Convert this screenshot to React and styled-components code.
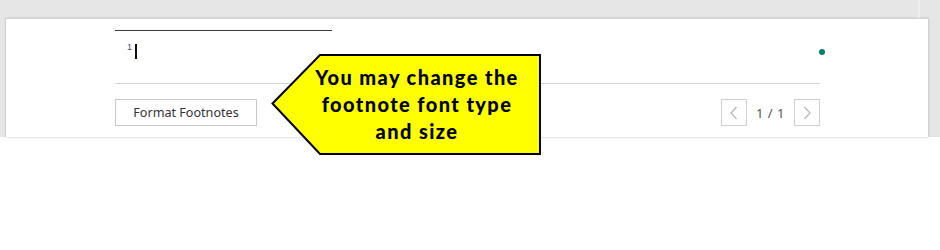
import React from 'react';
import styled, { createGlobalStyle } from 'styled-components';

const GlobalStyle = createGlobalStyle`
  html, body {
    margin: 0;
    padding: 0;
    background: #ffffff;
  }
  body {
    font-family: "Noto Sans", "Open Sans", sans-serif;
  }
`;

const Screen = styled.div`
  position: relative;
  width: 940px;
  height: 250px;
  background: #ffffff;
`;

const Workspace = styled.div`
  position: relative;
  height: 137px;
  background: #e6e6e6;
  padding: 18px 0 0 6px;
  box-sizing: border-box;
  display: flex;
  &::after {
    content: '';
    position: absolute;
    left: 918px;
    top: 0;
    width: 2px;
    height: 18px;
    background: #ededed;
  }
`;

const Page = styled.div`
  width: 922px;
  background: #ffffff;
  border-top: 1px solid #d2d2d2;
  box-shadow: -1px 0 1px #cfcfcf, 1px 0 2px #c8c8c8;
  box-sizing: border-box;
  padding: 11px 0 0 109px;
`;

const Column = styled.div`
  width: 705px;
  display: flex;
  flex-direction: column;
`;

const Separator = styled.div`
  width: 217px;
  height: 1px;
  background: #3a3a3a;
`;

const FootnoteRow = styled.div`
  height: 52px;
  display: flex;
  align-items: flex-start;
  justify-content: space-between;
  padding: 12px 0 0 12px;
  box-sizing: border-box;
`;

const Note = styled.div`
  display: flex;
  align-items: flex-start;
`;

const Mark = styled.span`
  font-family: "Liberation Sans", Arial, sans-serif;
  font-size: 9px;
  line-height: 9px;
  color: #44546a;
`;

const Caret = styled.span`
  display: block;
  width: 1.5px;
  height: 15px;
  margin: 1px 0 0 3px;
  background: #111111;
`;

const Dot = styled.span`
  width: 6px;
  height: 6px;
  border-radius: 50%;
  background: #00806b;
  margin: 6px -5px 0 0;
`;

const Divider = styled.div`
  height: 1px;
  background: #d4d4d4;
`;

const Controls = styled.div`
  display: flex;
  align-items: center;
  justify-content: space-between;
  padding-top: 15px;
`;

const FormatButton = styled.button`
  width: 142px;
  height: 27px;
  border: 1px solid #c8c8c8;
  background: #ffffff;
  font-family: "Noto Sans", "Open Sans", sans-serif;
  font-size: 12.6px;
  color: #333333;
  padding: 0;
  box-sizing: border-box;
`;

const Pager = styled.div`
  display: flex;
  align-items: center;
  gap: 9px;
`;

const PageButton = styled.button`
  width: 26px;
  height: 27px;
  border: 1px solid #d0d0d0;
  background: #ffffff;
  padding: 0;
  box-sizing: border-box;
  display: flex;
  align-items: center;
  justify-content: center;
`;

const PageCount = styled.span`
  font-family: "Noto Sans", "Open Sans", sans-serif;
  font-size: 13px;
  color: #555555;
  letter-spacing: 0.5px;
`;

const Callout = styled.div`
  position: absolute;
  left: 271px;
  top: 54px;
  width: 271px;
  height: 101px;
`;

const CalloutShape = styled.svg`
  position: absolute;
  left: 0;
  top: 0;
`;

const CalloutText = styled.div`
  position: absolute;
  left: 26px;
  top: 0;
  width: 240px;
  height: 101px;
  display: flex;
  align-items: center;
  justify-content: center;
  text-align: center;
  font-family: Lato, "Noto Sans", sans-serif;
  font-weight: 900;
  font-size: 20px;
  letter-spacing: 1.4px;
  line-height: 27px;
  color: #000000;
`;

const Chevron = ({ dir }) => (
  <svg width="10" height="14" viewBox="0 0 10 14">
    <path
      d={dir === 'left' ? 'M7.5 1 L2 7 L7.5 13' : 'M2.5 1 L8 7 L2.5 13'}
      fill="none"
      stroke="#b4b4b4"
      strokeWidth="1.2"
    />
  </svg>
);

const App = () => (
  <Screen>
    <GlobalStyle />
    <Workspace>
      <Page>
        <Column>
          <Separator />
          <FootnoteRow>
            <Note>
              <Mark>1</Mark>
              <Caret />
            </Note>
            <Dot />
          </FootnoteRow>
          <Divider />
          <Controls>
            <FormatButton>Format Footnotes</FormatButton>
            <Pager>
              <PageButton aria-label="Previous">
                <Chevron dir="left" />
              </PageButton>
              <PageCount>1 / 1</PageCount>
              <PageButton aria-label="Next">
                <Chevron dir="right" />
              </PageButton>
            </Pager>
          </Controls>
        </Column>
      </Page>
    </Workspace>
    <Callout>
      <CalloutShape width="271" height="101" viewBox="0 0 271 101">
        <polygon
          points="1.5,49.5 49,1 269,1 269,100 49,100"
          fill="#ffff00"
          stroke="#000000"
          strokeWidth="2"
          strokeLinejoin="miter"
        />
      </CalloutShape>
      <CalloutText>
        You may change the
        <br />
        footnote font type
        <br />
        and size
      </CalloutText>
    </Callout>
  </Screen>
);

export default App;
